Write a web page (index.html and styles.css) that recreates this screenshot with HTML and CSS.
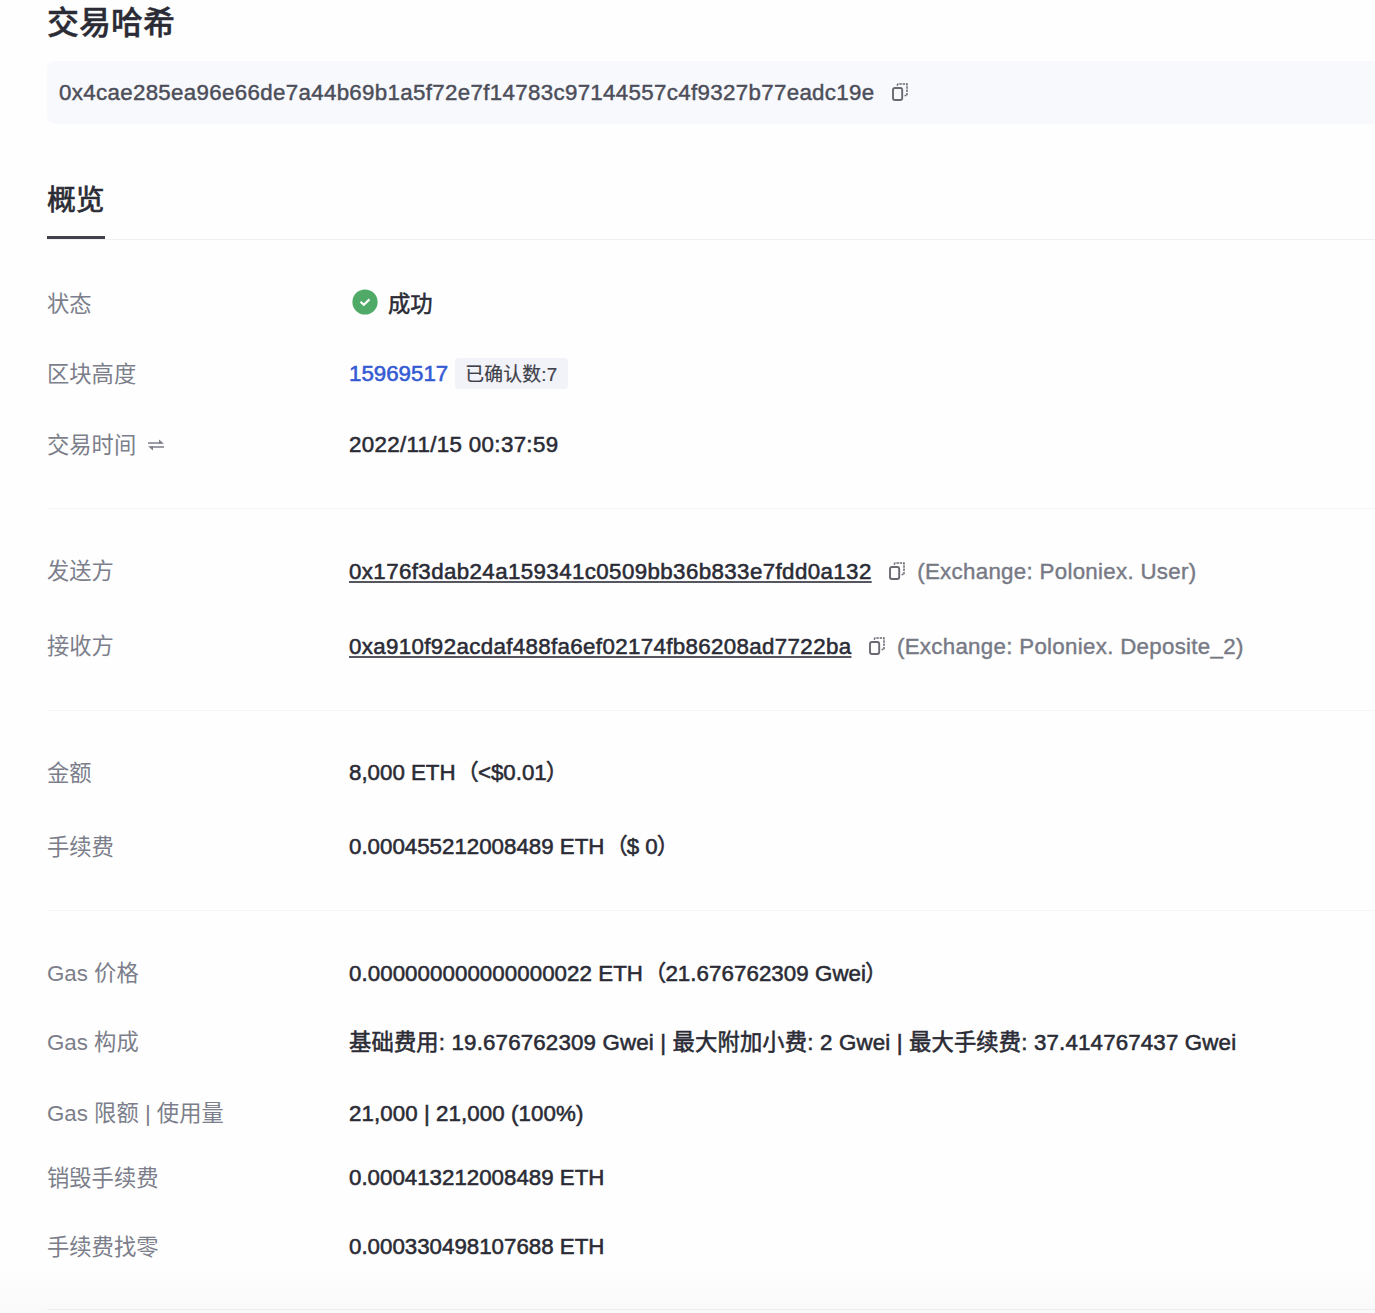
FILE: index.html
```html
<!DOCTYPE html>
<html lang="zh-CN">
<head>
<meta charset="utf-8">
<title>交易哈希</title>
<link rel="stylesheet" href="styles.css">
</head>
<body>
<svg class="sprite" aria-hidden="true">
  <symbol id="copy" viewBox="0 0 18 20">
    <rect x="2" y="6" width="9.2" height="12" rx="2" fill="none" stroke="currentColor" stroke-width="1.9"/>
    <path d="M6 3.6L7 2H16V13.6H13.6" fill="none" stroke="currentColor" stroke-width="1.5" stroke-dasharray="2.4 .9"/>
  </symbol>
</svg>
<main class="page">
  <h1 class="title">交易哈希</h1>
  <div class="hash"><span class="hash-text">0x4cae285ea96e66de7a44b69b1a5f72e7f14783c97144557c4f9327b77eadc19e</span><svg class="copy"><use href="#copy"/></svg></div>
  <nav class="tabs"><span class="tab">概览</span></nav>

  <section class="group group-status">
    <div class="row"><div class="label">状态</div><div class="value"><svg class="check" viewBox="0 0 26 26"><circle cx="13" cy="13" r="12.6" fill="#4eaa66"/><path d="M8.5 12.7l3.3 3.1 5.7-5.4" fill="none" stroke="#fff" stroke-width="2.2"/></svg><span class="success">成功</span></div></div>
    <div class="row"><div class="label">区块高度</div><div class="value"><a class="block">15969517</a><span class="badge">已确认数:7</span></div></div>
    <div class="row"><div class="label">交易时间<svg class="swap" viewBox="0 0 18 14"><path d="M1 5H14M17 9H4" fill="none" stroke="currentColor" stroke-width="1.7"/><path d="M12 1.6L17 5.8H12ZM6 12.4L1 8.2H6Z" fill="currentColor"/></svg></div><div class="value"><span class="time">2022/11/15 00:37:59</span></div></div>
  </section>

  <section class="group group-parties">
    <div class="row"><div class="label">发送方</div><div class="value"><a class="address">0x176f3dab24a159341c0509bb36b833e7fdd0a132</a><svg class="copy"><use href="#copy"/></svg><span class="note">(Exchange: Poloniex. User)</span></div></div>
    <div class="row"><div class="label">接收方</div><div class="value"><a class="address address-to">0xa910f92acdaf488fa6ef02174fb86208ad7722ba</a><svg class="copy"><use href="#copy"/></svg><span class="note">(Exchange: Poloniex. Deposite_2)</span></div></div>
  </section>

  <section class="group group-amount">
    <div class="row"><div class="label">金额</div><div class="value">8,000 ETH<span class="open">（</span>&lt;$0.01<span class="close">）</span></div></div>
    <div class="row"><div class="label">手续费</div><div class="value">0.000455212008489 ETH<span class="open">（</span>$ 0<span class="close">）</span></div></div>
  </section>

  <section class="group group-gas">
    <div class="row"><div class="label">Gas 价格</div><div class="value gas-price">0.000000000000000022 ETH<span class="open">（</span>21.676762309 Gwei<span class="close">）</span></div></div>
    <div class="row"><div class="label">Gas 构成</div><div class="value gas-parts">基础费用: 19.676762309 Gwei | 最大附加小费: 2 Gwei | 最大手续费: 37.414767437 Gwei</div></div>
    <div class="row"><div class="label">Gas 限额 | 使用量</div><div class="value gas-limit">21,000 | 21,000 (100%)</div></div>
    <div class="row"><div class="label">销毁手续费</div><div class="value">0.000413212008489 ETH</div></div>
    <div class="row"><div class="label">手续费找零</div><div class="value">0.000330498107688 ETH</div></div>
  </section>
</main>
</body>
</html>
```

FILE: styles.css
```css
* { box-sizing: border-box; }
body {
  margin: 0;
  background: #fefefe;
  color: #2a2b35;
  font: 22.3px/32px "Liberation Sans", "Noto Sans CJK SC", sans-serif;
  overflow: hidden;
}
.sprite { display: none; }
.page {
  height: 1313px;
  padding-left: 47px;
  background: linear-gradient(#fefefe 1265px, #f9f9fa 1313px);
}
.title {
  margin: 0;
  height: 61px;
  padding-top: 1px;
  font-size: 32px;
  line-height: 44px;
  font-weight: 500;
  -webkit-text-stroke: .4px;
}
.hash {
  display: flex;
  align-items: center;
  height: 63px;
  padding-left: 12px;
  border-radius: 8px 0 0 8px;
  background: #f8f9fd;
  color: #4c4e59;
}
.hash-text { letter-spacing: .333px; -webkit-text-stroke: .45px; }
.copy {
  flex: none;
  width: 18px;
  height: 20px;
  margin: 0 0 1px 16.5px;
  color: #686971;
  -webkit-text-stroke: 0;
}
.tabs {
  display: flex;
  height: 116px;
  padding-top: 51px;
  border-bottom: 1px solid #f0f0f2;
}
.tab {
  height: 64px;
  padding-top: 2px;
  border-bottom: 3px solid #41424c;
  font-size: 28.8px;
  line-height: 46px;
  font-weight: 400;
  -webkit-text-stroke: .7px;
}
.group {
  display: grid;
  border-bottom: 1px solid #f5f5f7;
}
.group-status { height: 269px; padding-top: 27px; grid-template-rows: repeat(3, 71px); }
.group-parties { height: 202px; padding-top: 25px; grid-template-rows: repeat(2, 75px); }
.group-amount { height: 200px; padding-top: 25px; grid-template-rows: repeat(2, 74px); }
.group-gas { height: 399px; padding-top: 28px; grid-template-rows: 69px 69px 73px 56px 82px; border-color: #ededf1; }
.row {
  display: grid;
  grid-template-columns: 302px 1fr;
  align-items: center;
  white-space: nowrap;
}
.label { display: flex; align-items: center; padding-top: 1px; color: #7c7e8b; white-space: pre; }
.value { display: flex; align-items: center; white-space: pre; -webkit-text-stroke: .55px; }
.open { margin: 0 -1px 0 1px; }
.close { margin-left: -1px; }
.check { width: 26px; height: 26px; margin: 0 10px 2px 3px; -webkit-text-stroke: 0; }
.success { padding-top: 4px; }
.group-status .label { padding-top: 2px; }
.group-status .row:first-child .label { padding-top: 4px; }
.block { color: #345ad3; }
.badge {
  height: 31px;
  margin-left: 7px;
  padding: 2px 10px 0;
  border-radius: 4px;
  background: #f2f3f8;
  color: #3e404a;
  font-size: 18.8px;
  line-height: 30px;
  letter-spacing: .25px;
  -webkit-text-stroke: .2px;
}
.swap { width: 18px; height: 14px; margin: 0 0 2px 11px; }
.time { letter-spacing: .34px; }
.address {
  letter-spacing: .4px;
  text-decoration: underline #55565f;
  text-decoration-thickness: 2px;
  text-underline-offset: 2px;
  text-decoration-skip-ink: none;
}
.address-to { letter-spacing: .36px; }
.note { margin-left: 11px; letter-spacing: .3px; color: #777985; -webkit-text-stroke: .4px; }
.gas-price { letter-spacing: .06px; }
.gas-parts { letter-spacing: .16px; }
.gas-limit { letter-spacing: .08px; }
```
